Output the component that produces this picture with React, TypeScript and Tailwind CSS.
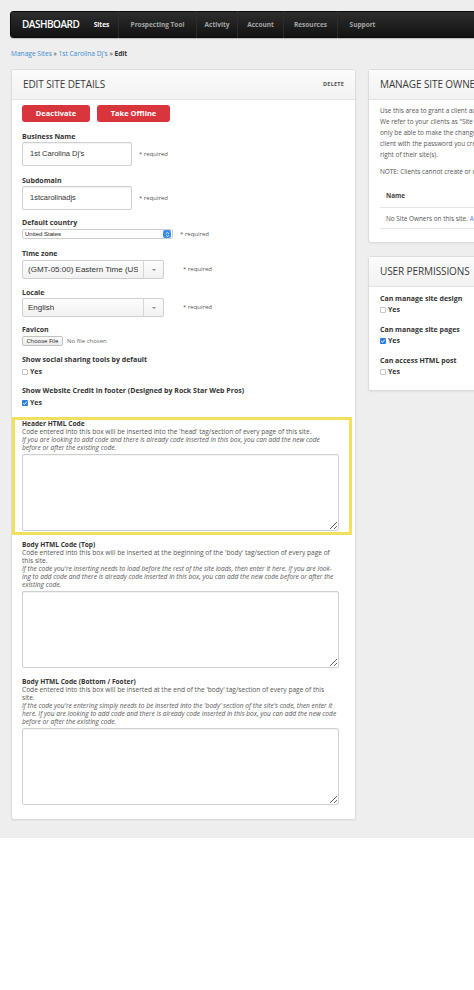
import * as React from "react";

const NAV = [
  { label: "Sites", w: "w-[33px]", active: true },
  { label: "Prospecting Tool", w: "w-[78px]" },
  { label: "Activity", w: "w-[41px]" },
  { label: "Account", w: "w-[46px]" },
  { label: "Resources", w: "w-[54px]" },
  { label: "Support", w: "w-[50px]" },
];

function Checkbox({ checked = false }: { checked?: boolean }) {
  if (checked) {
    return (
      <span className="flex h-[6px] w-[6px] items-center justify-center rounded-[1px] bg-[#2d7fe0]">
        <svg viewBox="0 0 10 10" className="h-[6px] w-[6px]">
          <path d="M2 5.2 L4.2 7.4 L8 2.8" fill="none" stroke="#fff" strokeWidth="1.6" />
        </svg>
      </span>
    );
  }
  return <span className="h-[6px] w-[6px] rounded-[1px] border border-[#c4c4c4] bg-white" />;
}

function CheckRow({ checked = false }: { checked?: boolean }) {
  return (
    <div className="flex h-[10px] items-center gap-[1px]">
      <Checkbox checked={checked} />
      <span className="ml-[1px] text-[7px] font-bold leading-[10px] text-[#333]">Yes</span>
    </div>
  );
}

function Label({ children }: { children: React.ReactNode }) {
  return <div className="h-[10px] text-[7px] font-bold leading-[10px] text-[#333]">{children}</div>;
}

function Required({ className = "" }: { className?: string }) {
  return <span className={`text-[6px] text-[#555] ${className}`}>* required</span>;
}

function TextInput({ value }: { value: string }) {
  return (
    <div className="flex h-[24px] w-[110px] items-center rounded-[2px] border border-[#d0d0d0] bg-white pl-[7px] font-['Liberation_Sans',sans-serif] text-[7.5px] text-[#333] shadow-[inset_0_1px_1px_rgba(0,0,0,0.06)]">
      {value}
    </div>
  );
}

function DropSelect({ value }: { value: string }) {
  return (
    <div className="flex h-[19px] w-[142px] items-center rounded-[2px] border border-[#cfcfcf] bg-gradient-to-b from-[#fdfdfd] to-[#f1f1f1]">
      <span className="mr-[5px] flex-1 overflow-hidden whitespace-nowrap pl-[5px] font-['Liberation_Sans',sans-serif] text-[8px] text-[#333]">
        {value}
      </span>
      <span className="flex h-full w-[20px] shrink-0 items-center justify-center border-l border-[#d6d6d6]">
        <svg viewBox="0 0 8 4" className="h-[2px] w-[6px]">
          <path d="M0 0 H8 L4 4 Z" fill="#8a8a8a" />
        </svg>
      </span>
    </div>
  );
}

function CodeField({
  title,
  lines,
  italic,
}: {
  title: string;
  lines: string[];
  italic: string[];
}) {
  return (
    <div>
      <div className="text-[6.6px] font-bold leading-[8px] text-[#333]">{title}</div>
      <div className="text-[6.6px] leading-[8px] text-[#555]">
        {lines.map((l) => (
          <div key={l} className="whitespace-nowrap">{l}</div>
        ))}
        {italic.map((l) => (
          <div key={l} className="whitespace-nowrap italic">{l}</div>
        ))}
      </div>
      <textarea className="mt-[2px] block h-[77px] w-[317px] rounded-[2px] border border-[#d0d0d0] bg-white shadow-[inset_0_1px_1px_rgba(0,0,0,0.05)]" />
    </div>
  );
}

function PanelHeader({ title, right }: { title: string; right?: string }) {
  return (
    <div className="flex h-[30px] items-center justify-between border-b border-[#e2e2e2] bg-gradient-to-b from-[#fbfbfb] to-[#f2f2f2] px-[11px]">
      <span className="whitespace-nowrap text-[10px] tracking-[-0.01em] text-[#3a3a3a]">{title}</span>
      {right ? <span className="text-[5.5px] font-bold tracking-[0.04em] text-[#555]">{right}</span> : null}
    </div>
  );
}

export default function App() {
  return (
    <div className="h-[990px] w-[474px] overflow-hidden bg-white font-['Open_Sans','Liberation_Sans',sans-serif]">
      <div className="h-[838px] bg-[#eeeeee] pt-[11px]">
        {/* top bar */}
        <div className="ml-[10px] flex h-[27px] w-[480px] items-center rounded-l-[3px] border border-[#0b0b0b] bg-gradient-to-b from-[#2e2e2e] to-[#121212] shadow-[0_1px_1px_rgba(0,0,0,0.2)]">
          <span className="ml-[11px] w-[63px] text-[10px] font-semibold tracking-[-0.05em] text-white">DASHBOARD</span>
          {NAV.map((item, i) => (
            <span
              key={item.label}
              className={`${item.w} flex h-[27px] items-center justify-center whitespace-nowrap text-[6.5px] font-bold ${
                item.active ? "text-white" : "text-[#a6a6a6]"
              } ${i > 0 ? "border-l border-[#2c2c2c]" : ""}`}
            >
              {item.label}
            </span>
          ))}
        </div>

        {/* breadcrumb */}
        <div className="ml-[11px] mt-[11px] h-[10px] text-[6.6px] leading-[10px] text-[#333]">
          <span className="text-[#3d8bd0]">Manage Sites</span> »{" "}
          <span className="text-[#3d8bd0]">1st Carolina Dj's</span> » <span className="font-bold">Edit</span>
        </div>

        <div className="ml-[11px] mt-[10px] flex items-start gap-[12px]">
          {/* left panel */}
          <div className="w-[345px] shrink-0 rounded-[3px] border border-[#dcdcdc] bg-white shadow-[0_1px_2px_rgba(0,0,0,0.05)]">
            <PanelHeader title="EDIT SITE DETAILS" right="DELETE" />
            <div className="px-[10px] pb-[14px] pt-[5px]">
              <div className="flex gap-[7px]">
                <span className="flex h-[17px] w-[68px] items-center justify-center rounded-[3px] bg-[#d8353d] text-[7.5px] font-bold text-white">
                  Deactivate
                </span>
                <span className="flex h-[17px] w-[73px] items-center justify-center rounded-[3px] bg-[#d8353d] text-[7.5px] font-bold text-white">
                  Take Offline
                </span>
              </div>

              <div className="mt-[10px]">
                <Label>Business Name</Label>
                <div className="flex items-center">
                  <TextInput value="1st Carolina Dj's" />
                  <Required className="ml-[7px]" />
                </div>
              </div>

              <div className="mt-[10px]">
                <Label>Subdomain</Label>
                <div className="flex items-center">
                  <TextInput value="1stcarolinadjs" />
                  <Required className="ml-[7px]" />
                </div>
              </div>

              <div className="mt-[8px]">
                <Label>Default country</Label>
                <div className="mt-[1px] flex items-center">
                  <div className="flex h-[10px] w-[151px] items-center rounded-[2px] border border-[#cfcfcf] bg-white pl-[2px] pr-[1px] font-['Liberation_Sans',sans-serif] text-[6px] text-[#222]">
                    <span className="flex-1">United States</span>
                    <span className="flex h-[8px] w-[8px] items-center justify-center rounded-[2px] bg-[#3a8ef0]">
                      <svg viewBox="0 0 8 8" className="h-[7px] w-[7px]">
                        <path d="M2.3 3.2 L4 1.6 L5.7 3.2 M2.3 4.8 L4 6.4 L5.7 4.8" fill="none" stroke="#fff" strokeWidth="0.9" />
                      </svg>
                    </span>
                  </div>
                  <Required className="ml-[7px]" />
                </div>
              </div>

              <div className="mt-[10px]">
                <Label>Time zone</Label>
                <div className="mt-[1px] flex items-center">
                  <DropSelect value="(GMT-05:00) Eastern Time (US & Canada)" />
                  <Required className="ml-[19px]" />
                </div>
              </div>

              <div className="mt-[9px]">
                <Label>Locale</Label>
                <div className="flex items-center">
                  <DropSelect value="English" />
                  <Required className="ml-[19px]" />
                </div>
              </div>

              <div className="mt-[8px]">
                <Label>Favicon</Label>
                <div className="mt-[1px] flex h-[10px] items-center">
                  <span className="flex h-[10px] w-[41px] items-center justify-center rounded-[2px] border border-[#c2c2c2] bg-gradient-to-b from-[#fbfbfb] to-[#ececec] text-[6px] text-[#222]">
                    Choose File
                  </span>
                  <span className="ml-[4px] text-[6px] text-[#666]">No file chosen</span>
                </div>
              </div>

              <div className="mt-[9px]">
                <Label>Show social sharing tools by default</Label>
                <div className="mt-[2px]">
                  <CheckRow />
                </div>
              </div>

              <div className="mt-[9px]">
                <Label>Show Website Credit in footer (Designed by Rock Star Web Pros)</Label>
                <div className="mt-[2px]">
                  <CheckRow checked />
                </div>
              </div>

              <div className="-ml-[10px] mt-[9px] w-[340px] border-[3px] border-[#f3df5b] pb-[1px] pl-[7px]">
                <CodeField
                  title="Header HTML Code"
                  lines={["Code entered into this box will be inserted into the 'head' tag/section of every page of this site."]}
                  italic={[
                    "If you are looking to add code and there is already code inserted in this box, you can add the new code",
                    "before or after the existing code.",
                  ]}
                />
              </div>

              <div className="mt-[6px]">
                <CodeField
                  title="Body HTML Code (Top)"
                  lines={[
                    "Code entered into this box will be inserted at the beginning of the 'body' tag/section of every page of",
                    "this site.",
                  ]}
                  italic={[
                    "If the code you're inserting needs to load before the rest of the site loads, then enter it here. If you are look-",
                    "ing to add code and there is already code inserted in this box, you can add the new code before or after the",
                    "existing code.",
                  ]}
                />
              </div>

              <div className="mt-[10px]">
                <CodeField
                  title="Body HTML Code (Bottom / Footer)"
                  lines={[
                    "Code entered into this box will be inserted at the end of the 'body' tag/section of every page of this",
                    "site.",
                  ]}
                  italic={[
                    "If the code you're entering simply needs to be inserted into the 'body' section of the site's code, then enter it",
                    "here. If you are looking to add code and there is already code inserted in this box, you can add the new code",
                    "before or after the existing code.",
                  ]}
                />
              </div>
            </div>
          </div>

          {/* right column */}
          <div className="w-[240px] shrink-0">
            <div className="rounded-[3px] border border-[#dcdcdc] bg-white shadow-[0_1px_2px_rgba(0,0,0,0.05)]">
              <PanelHeader title="MANAGE SITE OWNERS" />
              <div className="px-[11px] pb-[13px] pt-[5px] text-[6.4px] leading-[11px] text-[#555]">
                <div className="whitespace-nowrap">Use this area to grant a client access to their site.</div>
                <div className="whitespace-nowrap">We refer to your clients as "Site Owners". Site Owners will</div>
                <div className="whitespace-nowrap">only be able to make the changes you allow. Provide your</div>
                <div className="whitespace-nowrap">client with the password you create and they can log in</div>
                <div className="whitespace-nowrap">right of their site(s).</div>
                <div className="mt-[6px] whitespace-nowrap">NOTE: Clients cannot create or delete sites.</div>
                <div className="mt-[7px]">
                  <div className="flex h-[24px] items-center border-b border-[#e6e6e6] pl-[6px] font-bold text-[#444]">Name</div>
                  <div className="flex h-[21px] items-center whitespace-nowrap border-b border-[#e6e6e6] pl-[6px]">
                    No Site Owners on this site. <span className="ml-[2px] text-[#3d8bd0]">Add one</span>
                  </div>
                </div>
              </div>
            </div>

            <div className="mt-[13px] rounded-[3px] border border-[#dcdcdc] bg-white shadow-[0_1px_2px_rgba(0,0,0,0.05)]">
              <PanelHeader title="USER PERMISSIONS" />
              <div className="px-[11px] pb-[13px] pt-[7px]">
                <Label>Can manage site design</Label>
                <div className="mt-[1px]">
                  <CheckRow />
                </div>
                <div className="mt-[10px]">
                  <Label>Can manage site pages</Label>
                </div>
                <div className="mt-[1px]">
                  <CheckRow checked />
                </div>
                <div className="mt-[10px]">
                  <Label>Can access HTML post</Label>
                </div>
                <div className="mt-[1px]">
                  <CheckRow />
                </div>
              </div>
            </div>
          </div>
        </div>
      </div>
    </div>
  );
}
